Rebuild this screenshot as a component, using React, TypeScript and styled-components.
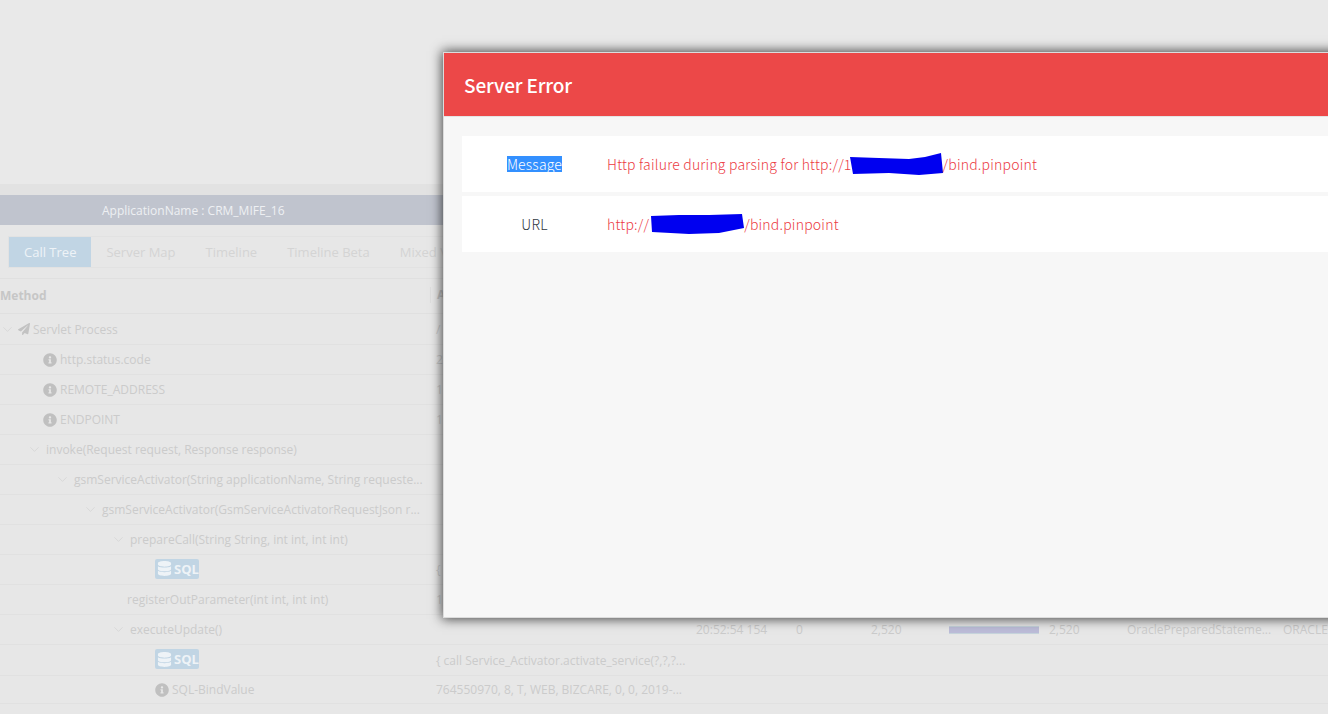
import { ReactNode } from "react";
import styled, { createGlobalStyle } from "styled-components";
import { FaDatabase, FaInfoCircle, FaPaperPlane } from "react-icons/fa";
import { ChevronDown } from "lucide-react";

const GlobalStyle = createGlobalStyle`
  html, body {
    margin: 0;
    padding: 0;
    height: 100%;
    overflow: hidden;
    background: #e7e7e7;
  }
`;

const Page = styled.div`
  position: relative;
  width: 1328px;
  height: 714px;
  overflow: hidden;
  display: flex;
  flex-direction: column;
  background: #e7e7e7;
  font-family: "Open Sans", "Noto Sans", sans-serif;
  font-size: 12px;
  color: #cbcbcb;
`;

const TopArea = styled.div`
  height: 184px;
  background: #e9e9e9;
`;

const TitleStrip = styled.div`
  height: 11px;
  background: #e2e2e2;
`;

const AppBar = styled.div`
  height: 30px;
  flex: none;
  background: #c0c4ce;
  color: #eef0f3;
  display: flex;
  align-items: center;
  padding-left: 102px;
`;

const TabBar = styled.div`
  display: flex;
  flex: none;
  margin: 11px 0 10px 8px;
  height: 30px;
  border: 1px solid #e2e2e2;
  border-right: none;
`;

const Tab = styled.div<{ $active?: boolean }>`
  padding: 0 15px;
  display: flex;
  align-items: center;
  font-size: 13px;
  background: ${(p) => (p.$active ? "#c1d5e4" : "transparent")};
  color: ${(p) => (p.$active ? "#eef3f7" : "#d4d4d4")};
`;

const HeaderRow = styled.div`
  height: 36px;
  flex: none;
  display: grid;
  grid-template-columns: 430px 1fr;
  align-items: center;
  padding-bottom: 2px;
  border-top: 1px solid #e0e0e0;
  border-bottom: 1px solid #e0e0e0;
  font-weight: 700;
  color: #c6c6c6;
  box-sizing: border-box;
`;

const ArgumentsHead = styled.div`
  border-left: 1px solid #dedede;
  padding-left: 6px;
  height: 16px;
  line-height: 16px;
`;

const Row = styled.div<{ $height: number }>`
  height: ${(p) => p.$height}px;
  flex: none;
  box-sizing: border-box;
  display: grid;
  grid-template-columns: 436px 260px 100px 75px 78px 100px 78px 156px 1fr;
  align-items: center;
  border-bottom: 1px solid #e1e1e1;
`;

const MethodCell = styled.div<{ $indent: number }>`
  display: flex;
  align-items: center;
  padding-left: ${(p) => p.$indent}px;
  white-space: nowrap;
  overflow: hidden;
`;

const Toggle = styled.span`
  display: flex;
  width: 19px;
  color: #cfcfcf;
`;

const PlaneIcon = styled(FaPaperPlane)`
  font-size: 12px;
  color: #c2c2c2;
  margin: 0 3px 0 -1px;
`;

const InfoIcon = styled(FaInfoCircle)`
  font-size: 14px;
  color: #c0c0c0;
  margin-right: 3px;
`;

const SqlBadge = styled.span`
  display: inline-flex;
  align-items: center;
  gap: 2px;
  width: 44px;
  height: 20px;
  margin-bottom: 2px;
  box-sizing: border-box;
  padding-left: 2px;
  border-radius: 2px;
  background: #c1d5e4;
  color: #eef3f7;
  font-size: 13px;
  font-weight: 700;
  svg {
    font-size: 15px;
  }
`;

const Cell = styled.div`
  white-space: nowrap;
`;

const GaugeCell = styled.div`
  display: flex;
`;

const Gauge = styled.div`
  width: 90px;
  height: 6px;
  background: #bcbcd8;
  border-top: 1px solid #c6d4dc;
  border-bottom: 1px solid #c6d4dc;
`;

const Modal = styled.section`
  position: absolute;
  left: 443px;
  top: 52px;
  width: 1000px;
  height: 566px;
  box-sizing: border-box;
  border: 1px solid #dcdcdc;
  background: #f7f7f7;
  box-shadow: 0 0 11px 1px rgba(0, 0, 0, 0.72);
  font-family: "Noto Sans CJK KR", "Noto Sans", sans-serif;
`;

const ModalHeader = styled.header`
  height: 63px;
  display: flex;
  align-items: center;
  padding-left: 20px;
  background: #ec4848;
  border-bottom: 1px solid #e4e4e4;
  color: #fff;
  font-size: 19px;
  font-weight: 500;
  letter-spacing: -0.15px;
`;

const ModalBody = styled.div`
  padding: 19px 0 0 18px;
  display: flex;
  flex-direction: column;
  gap: 4px;
`;

const ErrorRow = styled.div`
  height: 56px;
  display: grid;
  grid-template-columns: 145px 1fr;
  align-items: center;
  background: #fff;
  font-size: 14px;
  font-weight: 300;
  letter-spacing: 0.2px;
`;

const ErrorLabel = styled.div`
  display: flex;
  justify-content: center;
  color: #2f3640;
`;

const Selected = styled.span`
  background: #3390ff;
  color: #fff;
  line-height: 16px;
`;

const ErrorValue = styled.div`
  display: flex;
  align-items: center;
  color: #ec3a42;
  white-space: nowrap;
`;

const Scribble = styled.svg<{ $gap?: number }>`
  flex: none;
  display: block;
  margin-left: ${(p) => p.$gap ?? 0}px;
`;

type Line = {
  height: number;
  indent: number;
  toggle?: boolean;
  kind?: "plane" | "info" | "sql";
  label?: string;
  args?: string;
  timing?: boolean;
};

const lines: Line[] = [
  { height: 31, indent: 0, toggle: true, kind: "plane", label: "Servlet Process", args: "/" },
  { height: 30, indent: 43, kind: "info", label: "http.status.code", args: "2" },
  { height: 30, indent: 43, kind: "info", label: "REMOTE_ADDRESS", args: "1" },
  { height: 30, indent: 43, kind: "info", label: "ENDPOINT", args: "1" },
  { height: 30, indent: 27, toggle: true, label: "invoke(Request request, Response response)" },
  { height: 30, indent: 55, toggle: true, label: "gsmServiceActivator(String applicationName, String requeste..." },
  { height: 30, indent: 83, toggle: true, label: "gsmServiceActivator(GsmServiceActivatorRequestJson r..." },
  { height: 30, indent: 111, toggle: true, label: "prepareCall(String String, int int, int int)" },
  { height: 30, indent: 155, kind: "sql", args: "{" },
  { height: 30, indent: 127, label: "registerOutParameter(int int, int int)", args: "1" },
  { height: 30, indent: 111, toggle: true, label: "executeUpdate()", timing: true },
  { height: 31, indent: 155, kind: "sql", args: "{ call Service_Activator.activate_service(?,?,?..." },
  { height: 28, indent: 155, kind: "info", label: "SQL-BindValue", args: "764550970, 8, T, WEB, BIZCARE, 0, 0, 2019-..." },
];

const tabs = ["Call Tree", "Server Map", "Timeline", "Timeline Beta", "Mixed View"];

function leading(line: Line): ReactNode {
  if (line.kind === "plane") return <PlaneIcon />;
  if (line.kind === "info") return <InfoIcon />;
  if (line.kind === "sql") {
    return (
      <SqlBadge>
        <FaDatabase />
        SQL
      </SqlBadge>
    );
  }
  return null;
}

function App() {
  return (
    <Page>
      <GlobalStyle />
      <TopArea />
      <TitleStrip />
      <AppBar>ApplicationName : CRM_MIFE_16</AppBar>
      <TabBar>
        {tabs.map((tab, i) => (
          <Tab key={tab} $active={i === 0}>
            {tab}
          </Tab>
        ))}
      </TabBar>
      <HeaderRow>
        <div>Method</div>
        <ArgumentsHead>Argument</ArgumentsHead>
      </HeaderRow>
      {lines.map((line, i) => (
        <Row key={i} $height={line.height}>
          <MethodCell $indent={line.indent}>
            {line.toggle && (
              <Toggle>
                <ChevronDown size={15} strokeWidth={1} />
              </Toggle>
            )}
            {leading(line)}
            {line.label}
          </MethodCell>
          <Cell>{line.args}</Cell>
          {line.timing && (
            <>
              <Cell>20:52:54 154</Cell>
              <Cell>0</Cell>
              <Cell>2,520</Cell>
              <GaugeCell>
                <Gauge />
              </GaugeCell>
              <Cell>2,520</Cell>
              <Cell>OraclePreparedStateme...</Cell>
              <Cell>ORACLE</Cell>
            </>
          )}
        </Row>
      ))}
      <Modal>
        <ModalHeader>Server Error</ModalHeader>
        <ModalBody>
          <ErrorRow>
            <ErrorLabel>
              <Selected>Message</Selected>
            </ErrorLabel>
            <ErrorValue>
              Http failure during parsing for http://1
              <Scribble $gap={-3} width="94" height="24" viewBox="0 0 94 24">
                <path
                  d="M1 5 L30 6 L60 7 L76 5 L92 1 L94 21 L70 23 L40 21 L4 22 Z"
                  fill="#0000f0"
                />
              </Scribble>
              /bind.pinpoint
            </ErrorValue>
          </ErrorRow>
          <ErrorRow>
            <ErrorLabel>URL</ErrorLabel>
            <ErrorValue>
              http://
              <Scribble width="95" height="22" viewBox="0 0 95 22">
                <path
                  d="M2 3 L30 2 L60 2 L93 1 L95 15 L70 20 L40 21 L3 19 Z"
                  fill="#0000f0"
                />
              </Scribble>
              /bind.pinpoint
            </ErrorValue>
          </ErrorRow>
        </ModalBody>
      </Modal>
    </Page>
  );
}

export default App;
